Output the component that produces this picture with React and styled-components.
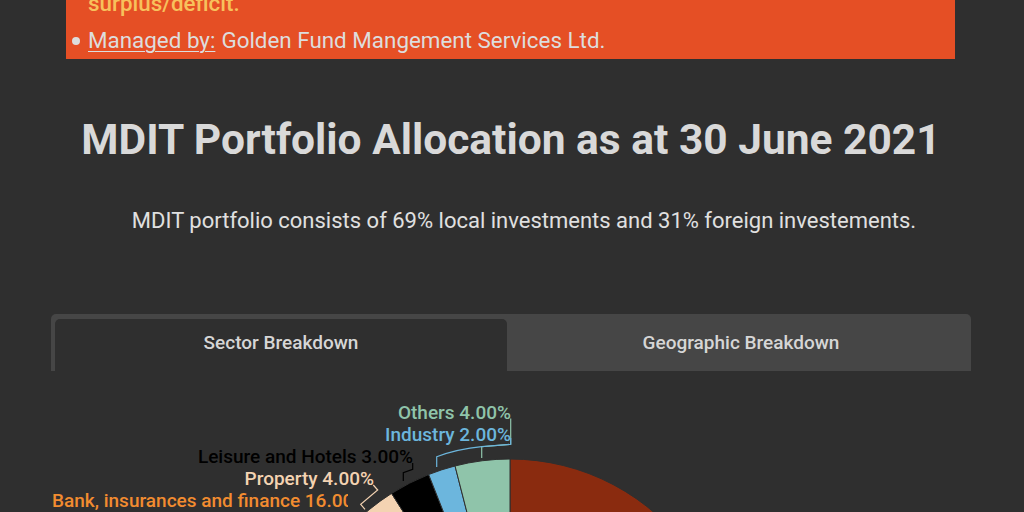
import React from "react";
import styled, { createGlobalStyle } from "styled-components";

const GlobalStyle = createGlobalStyle`
  html, body {
    margin: 0;
    padding: 0;
    background: #2f2f2f;
    font-family: Roboto, "Noto Sans", "Liberation Sans", sans-serif;
    overflow: hidden;
  }
`;

const Page = styled.div`
  height: 512px;
  padding: 0 53px 0 51px;
  overflow: hidden;
`;

const Notice = styled.ul`
  list-style: none;
  margin: -15.5px 16px 0 15px;
  padding: 3px 16px 4.5px 6px;
  background: #e54f25;
`;

const NoticeItem = styled.li`
  display: flex;
  align-items: center;
  gap: 8px;
  font-size: 22.4px;
  line-height: 30px;
  color: ${(p) => (p.$accent ? "#f7c15c" : "#dddddd")};
  font-weight: ${(p) => (p.$accent ? 500 : 400)};
  padding-left: ${(p) => (p.$indent ? "16px" : "0")};
  & + & {
    margin-top: 7px;
  }
`;

const Dot = styled.span`
  width: 8px;
  height: 8px;
  border-radius: 50%;
  background: #dddddd;
  flex-shrink: 0;
  margin-top: 3px;
`;

const Underlined = styled.span`
  text-decoration: underline;
  text-underline-offset: 3px;
  text-decoration-thickness: 1px;
  margin-right: 6px;
`;

const Title = styled.h1`
  margin: 55px 0 0;
  text-align: center;
  font-size: 42.5px;
  line-height: 51px;
  font-weight: 700;
  color: #d9d9d9;
`;

const Lead = styled.p`
  margin: 40.5px 0 0;
  padding-left: 26px;
  text-align: center;
  font-size: 22px;
  line-height: 30px;
  color: #e0e0e0;
`;

const TabBar = styled.div`
  display: flex;
  gap: 8px;
  margin-top: 78.5px;
  padding: 5px 4px 0;
  background: #464646;
  border-radius: 5px 5px 0 0;
`;

const Tab = styled.div`
  flex: 1;
  padding: 11.5px 0 16.5px;
  text-align: center;
  font-size: 19px;
  line-height: 24px;
  font-weight: 500;
  color: #d6d6d6;
  background: ${(p) => (p.$active ? "#2f2f2f" : "transparent")};
  border-radius: 5px 5px 0 0;
`;

const ChartArea = styled.div`
  height: 400px;
`;

const Label = styled.text`
  font-family: Roboto, "Noto Sans", sans-serif;
  font-size: 19px;
  font-weight: 500;
`;

const CX = 510;
const CY = 680;
const R = 221;

const slices = [
  { name: "Foreign investments", value: 31, color: "#8a2b0f" },
  { name: "Government securities", value: 24, color: "#c9a227" },
  { name: "Commerce", value: 16, color: "#5f7fbf" },
  { name: "Bank, insurances and finance", value: 16, color: "#f28c30" },
  { name: "Property", value: 4, color: "#f4d3b2" },
  { name: "Leisure and Hotels", value: 3, color: "#000000" },
  { name: "Industry", value: 2, color: "#6cb6dd" },
  { name: "Others", value: 4, color: "#8fc4aa" },
];

function point(a) {
  return [CX + R * Math.sin(a), CY - R * Math.cos(a)];
}

function arcPath(a0, a1) {
  const [x0, y0] = point(a0);
  const [x1, y1] = point(a1);
  const large = a1 - a0 > Math.PI ? 1 : 0;
  return `M${CX} ${CY} L${x0} ${y0} A${R} ${R} 0 ${large} 1 ${x1} ${y1} Z`;
}

function Pie() {
  let start = 0;
  return slices.map((s) => {
    const a0 = start;
    const a1 = start + (s.value / 100) * Math.PI * 2;
    start = a1;
    return (
      <path key={s.name} d={arcPath(a0, a1)} fill={s.color} stroke="#2f2f2f" strokeWidth="1" />
    );
  });
}

function SectorChart() {
  return (
    <svg width="920" height="400" viewBox="51 371 920 400">
      <defs>
        <clipPath id="bankClip">
          <rect x="40" y="480" width="308" height="40" />
        </clipPath>
      </defs>
      <Pie />
      <g fill="none" strokeWidth="1.2">
        <path d="M481.7 458 L481.7 446.7 L510.7 444.3 L510.7 418.5" stroke="#8fc4aa" />
        <path d="M436.7 467 L436.7 456.7 Q458 449 481.7 446.7 L510.7 444.3 L510.7 438" stroke="#6cb6dd" />
        <path d="M403.3 481 L403.3 472.7 L412.7 469.3 L412.7 463" stroke="#000000" />
        <path d="M373.3 485 L377.7 490 L360.7 504.3 L365 509.3" stroke="#f4d3b2" />
      </g>
      <Label x="511" y="419" textAnchor="end" fill="#8fc4aa">Others 4.00%</Label>
      <Label x="511" y="441" textAnchor="end" fill="#6cb6dd">Industry 2.00%</Label>
      <Label x="413" y="463" textAnchor="end" fill="#000000">Leisure and Hotels 3.00%</Label>
      <Label x="374" y="485" textAnchor="end" fill="#f4d3b2">Property 4.00%</Label>
      <g clipPath="url(#bankClip)">
        <Label x="52" y="507" fill="#f28c30">Bank, insurances and finance 16.00%</Label>
      </g>
    </svg>
  );
}

export default function App() {
  return (
    <>
      <GlobalStyle />
      <Page>
        <Notice>
          <NoticeItem $accent $indent>surplus/deficit.</NoticeItem>
          <NoticeItem>
            <Dot />
            <span>
              <Underlined>Managed by:</Underlined>
              Golden Fund Mangement Services Ltd.
            </span>
          </NoticeItem>
        </Notice>
        <Title>MDIT Portfolio Allocation as at 30 June 2021</Title>
        <Lead>
          MDIT portfolio consists of 69% local investments and 31% foreign investements.
        </Lead>
        <TabBar>
          <Tab $active>Sector Breakdown</Tab>
          <Tab>Geographic Breakdown</Tab>
        </TabBar>
        <ChartArea>
          <SectorChart />
        </ChartArea>
      </Page>
    </>
  );
}
